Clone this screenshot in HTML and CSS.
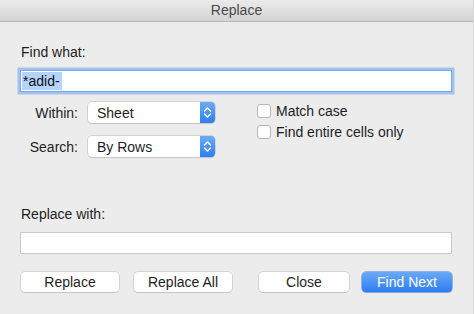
FILE: index.html
```html
<!DOCTYPE html>
<html>
<head>
<meta charset="utf-8">
<link rel="stylesheet" href="styles.css">
</head>
<body>
<div class="window">
  <div class="titlebar">Replace</div>
  <div class="content">
    <div class="label find-label">Find what:</div>
    <div class="input focused"><span class="sel">*adid-</span></div>
    <div class="options">
      <div class="popups">
        <div class="prow">
          <span class="plabel">Within:</span>
          <div class="popup"><span class="ptext">Sheet</span><span class="stepper"><svg width="9" height="13" viewBox="0 0 9 13"><path d="M1.5 5 L4.5 2 L7.5 5 M1.5 8 L4.5 11 L7.5 8" fill="none" stroke="#fff" stroke-width="1.4" stroke-linecap="round" stroke-linejoin="round"/></svg></span></div>
        </div>
        <div class="prow">
          <span class="plabel">Search:</span>
          <div class="popup"><span class="ptext">By Rows</span><span class="stepper"><svg width="9" height="13" viewBox="0 0 9 13"><path d="M1.5 5 L4.5 2 L7.5 5 M1.5 8 L4.5 11 L7.5 8" fill="none" stroke="#fff" stroke-width="1.4" stroke-linecap="round" stroke-linejoin="round"/></svg></span></div>
        </div>
      </div>
      <div class="checks">
        <label class="check"><span class="box"></span>Match case</label>
        <label class="check"><span class="box"></span>Find entire cells only</label>
      </div>
    </div>
    <div class="label repl-label">Replace with:</div>
    <div class="input plain"></div>
    <div class="buttons">
      <div class="group g1">
        <div class="btn wide">Replace</div>
        <div class="btn wide">Replace All</div>
      </div>
      <div class="group g2">
        <div class="btn narrow">Close</div>
        <div class="btn narrow primary">Find Next</div>
      </div>
    </div>
  </div>
</div>
</body>
</html>
```

FILE: styles.css
```css
html, body {
  margin: 0;
  padding: 0;
  width: 474px;
  height: 314px;
  overflow: hidden;
  background: #ececec;
  font-family: "Liberation Sans", Arial, sans-serif;
  font-size: 14px;
  color: #1e1e1e;
}
.window {
  width: 474px;
  height: 314px;
  box-sizing: border-box;
  border-right: 1px solid #d6d6d6;
  display: flex;
  flex-direction: column;
}
.titlebar {
  height: 21px;
  line-height: 21px;
  border-bottom: 1px solid #b4b4b4;
  background: linear-gradient(#ebebeb, #d4d4d4);
  text-align: center;
  color: #4a4a4a;
  font-size: 14px;
}
.content {
  padding: 0 21px 0 20px;
  display: flex;
  flex-direction: column;
}
.label {
  line-height: 16px;
  padding-left: 1px;
}
.find-label { margin-top: 22px; }
.input {
  height: 22px;
  box-sizing: border-box;
  background: #fff;
  margin-top: 10px;
}
.input.focused {
  border: 1px solid #7aa7e6;
  box-shadow: 0 0 0 2.5px #a2c3ee;
  padding: 1px 0 1px 1px;
  display: flex;
}
.sel {
  background: #b4d4fd;
  line-height: 18px;
  padding: 0 2px 0 1px;
  color: #111;
}
.input.plain {
  border: 1px solid #c9c9c9;
  margin-top: 10px;
}
.options {
  margin-top: 10px;
  display: flex;
}
.popups {
  display: flex;
  flex-direction: column;
  gap: 13px;
  width: 195px;
}
.prow {
  display: flex;
  align-items: center;
}
.plabel {
  width: 58px;
  text-align: right;
  margin-right: 10px;
}
.popup {
  width: 127px;
  height: 21px;
  box-sizing: border-box;
  background: #fff;
  border-radius: 4px;
  box-shadow: 0 0 0 0.5px #b9b9b9, 0 1px 1px rgba(0,0,0,0.12);
  display: flex;
  align-items: center;
  justify-content: space-between;
  overflow: hidden;
}
.ptext { padding-left: 9px; }
.stepper {
  width: 15px;
  height: 21px;
  background: linear-gradient(#6eabf7, #2e7df1);
  display: flex;
  align-items: center;
  justify-content: center;
}
.checks {
  margin-left: 42px;
  margin-top: 1px;
  display: flex;
  flex-direction: column;
  gap: 5px;
}
.check {
  display: flex;
  align-items: center;
  height: 16px;
}
.box {
  width: 14px;
  height: 14px;
  box-sizing: border-box;
  background: #fff;
  border: 1px solid #b7b7b7;
  border-radius: 3px;
  margin-right: 5px;
}
.repl-label { margin-top: 49px; }
.buttons {
  margin-top: 18px;
  padding-left: 1px;
  display: flex;
  justify-content: space-between;
}
.group { display: flex; }
.g1 { gap: 15px; }
.g2 { gap: 13px; }
.btn {
  height: 20px;
  line-height: 20px;
  text-align: center;
  background: #fff;
  border-radius: 4px;
  box-shadow: 0 0 0 0.5px #bdbdbd, 0 1px 1px rgba(0,0,0,0.12);
}
.wide { width: 98px; }
.narrow { width: 90px; }
.primary {
  background: linear-gradient(#6aa9f7, #2c7cf2);
  color: #fff;
  box-shadow: 0 0 0 0.5px #3a7fe0, 0 1px 1px rgba(0,0,0,0.12);
}
```
